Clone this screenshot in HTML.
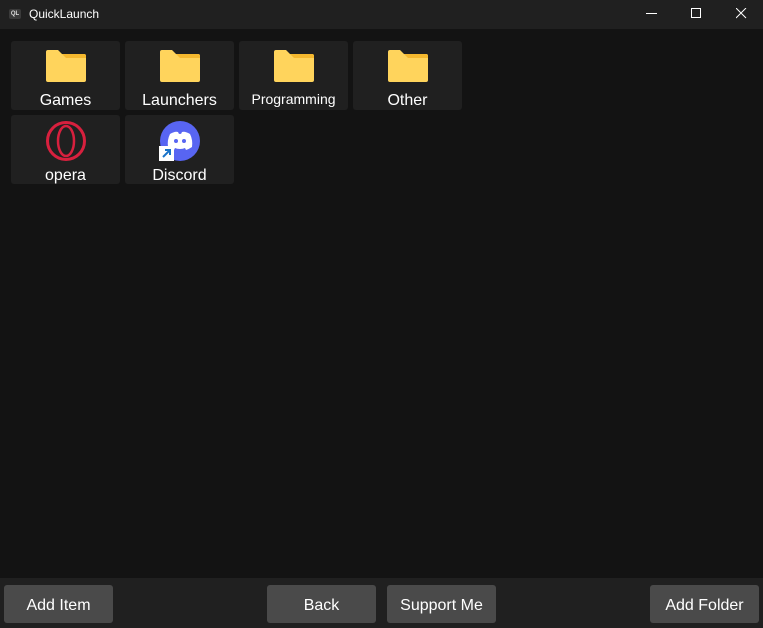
<!DOCTYPE html>
<html><head><style>
body{margin:0;width:763px;height:628px;background:#131313;font-family:"Liberation Sans",sans-serif;position:relative;overflow:hidden;color:#fff}
.tb{position:absolute;left:0;top:0;width:763px;height:29px;background:#202020}
.tb .t{position:absolute;left:29px;top:7px;font-size:12px;color:#fff}
.tb .ic{position:absolute;left:9px;top:9px;width:12px;height:10px;background:#3a3a3a;border-radius:2px;font-size:6px;font-weight:bold;color:#ddd;text-align:center;line-height:10px}
.tile{position:absolute;width:109px;height:69px;background:#202020;border-radius:3px}
.tile .l{position:absolute;left:0;right:0;top:51px;text-align:center;font-size:16px;color:#fff}
.tile svg{position:absolute;left:34px;top:8px}
.bar{position:absolute;left:0;top:578px;width:763px;height:50px;background:#202020}
.btn{position:absolute;top:585px;width:109px;height:38px;background:#4a4a4a;border-radius:3px;text-align:center;line-height:41px;font-size:16px;color:#fff}
</style></head><body>
<div class="tb"><div class="ic">QL</div><div class="t">QuickLaunch</div>
<svg style="position:absolute;left:646px;top:13px" width="11" height="2"><rect width="11" height="1" fill="#fff"/></svg>
<svg style="position:absolute;left:691px;top:8px" width="11" height="11"><rect x=".5" y=".5" width="9" height="9" fill="none" stroke="#fff"/></svg>
<svg style="position:absolute;left:736px;top:8px" width="11" height="11"><path d="M0 0L10 10M10 0L0 10" stroke="#fff"/></svg>
</div>
<div class="tile" style="left:11px;top:41px"><svg width="42" height="34"><path d="M1 3Q1 1 3 1H13L17 5H39Q41 5 41 7V31Q41 33 39 33H3Q1 33 1 31Z" fill="#ffd45c"/><path d="M17 5H39Q41 5 41 7V9H21Z" fill="#f5b82e"/></svg><div class="l">Games</div></div>
<div class="tile" style="left:125px;top:41px"><svg width="42" height="34"><path d="M1 3Q1 1 3 1H13L17 5H39Q41 5 41 7V31Q41 33 39 33H3Q1 33 1 31Z" fill="#ffd45c"/><path d="M17 5H39Q41 5 41 7V9H21Z" fill="#f5b82e"/></svg><div class="l">Launchers</div></div>
<div class="tile" style="left:239px;top:41px"><svg width="42" height="34"><path d="M1 3Q1 1 3 1H13L17 5H39Q41 5 41 7V31Q41 33 39 33H3Q1 33 1 31Z" fill="#ffd45c"/><path d="M17 5H39Q41 5 41 7V9H21Z" fill="#f5b82e"/></svg><div class="l" style="font-size:14px;top:50px">Programming</div></div>
<div class="tile" style="left:353px;top:41px"><svg width="42" height="34"><path d="M1 3Q1 1 3 1H13L17 5H39Q41 5 41 7V31Q41 33 39 33H3Q1 33 1 31Z" fill="#ffd45c"/><path d="M17 5H39Q41 5 41 7V9H21Z" fill="#f5b82e"/></svg><div class="l">Other</div></div>
<div class="tile" style="left:11px;top:115px"><svg width="42" height="42" style="top:5px"><circle cx="21" cy="21" r="18.5" fill="none" stroke="#d8203e" stroke-width="3"/><ellipse cx="21" cy="21" rx="8" ry="15" fill="none" stroke="#d8203e" stroke-width="2.5"/></svg><div class="l" style="top:52px">opera</div></div>
<div class="tile" style="left:125px;top:115px"><svg width="42" height="42" style="top:5px"><circle cx="21" cy="21" r="20" fill="#5865f2"/><path d="M11 14Q16 11 19 12L20 14Q21 13.5 22 14L23 12Q26 11 31 14Q34 20 33 27Q30 29 27 30L26 28Q24 29 21 29Q18 29 16 28L15 30Q12 29 9 27Q8 20 11 14Z" fill="#fff"/><circle cx="17" cy="21" r="2" fill="#5865f2"/><circle cx="25" cy="21" r="2" fill="#5865f2"/><rect x="0" y="26" width="15" height="15" fill="#fff"/><path d="M4 37L11 30M6 30H11V35" stroke="#1a73c8" stroke-width="2" fill="none"/></svg><div class="l" style="top:52px">Discord</div></div>
<div class="bar"></div>
<div class="btn" style="left:4px">Add Item</div>
<div class="btn" style="left:267px">Back</div>
<div class="btn" style="left:387px">Support Me</div>
<div class="btn" style="left:650px">Add Folder</div>
</body></html>
